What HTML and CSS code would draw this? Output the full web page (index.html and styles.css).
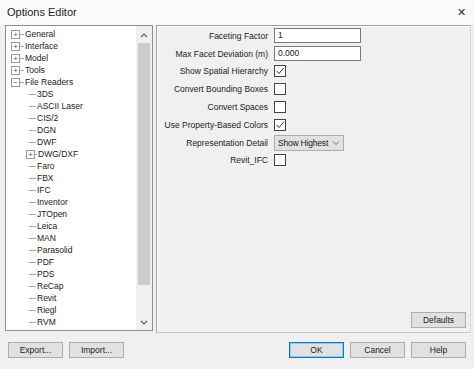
FILE: index.html
```html
<!DOCTYPE html>
<html lang="en">
<head>
    <meta charset="UTF-8">
    <meta name="viewport" content="width=device-width, initial-scale=1.0">
    <title>Options Editor</title>
    <link rel="stylesheet" href="styles.css">
</head>
<body>
    <div class="dialog">
        <div class="titlebar">
            <span class="title">Options Editor</span>
            <span class="close">&#x2715;</span>
        </div>

        <div class="main">
            <div class="tree">
                <ul class="tree-list">
                    <li class="node"><span class="expander">+</span><span class="stub"></span>General</li>
                    <li class="node"><span class="expander">+</span><span class="stub"></span>Interface</li>
                    <li class="node"><span class="expander">+</span><span class="stub"></span>Model</li>
                    <li class="node"><span class="expander">+</span><span class="stub"></span>Tools</li>
                    <li class="node"><span class="expander">&minus;</span><span class="stub"></span>File Readers</li>
                    <li class="leaf"><span class="branch"></span>3DS</li>
                    <li class="leaf"><span class="branch"></span>ASCII Laser</li>
                    <li class="leaf"><span class="branch"></span>CIS/2</li>
                    <li class="leaf"><span class="branch"></span>DGN</li>
                    <li class="leaf"><span class="branch"></span>DWF</li>
                    <li class="leaf sub"><span class="expander">+</span><span class="stub"></span>DWG/DXF</li>
                    <li class="leaf"><span class="branch"></span>Faro</li>
                    <li class="leaf"><span class="branch"></span>FBX</li>
                    <li class="leaf"><span class="branch"></span>IFC</li>
                    <li class="leaf"><span class="branch"></span>Inventor</li>
                    <li class="leaf"><span class="branch"></span>JTOpen</li>
                    <li class="leaf"><span class="branch"></span>Leica</li>
                    <li class="leaf"><span class="branch"></span>MAN</li>
                    <li class="leaf"><span class="branch"></span>Parasolid</li>
                    <li class="leaf"><span class="branch"></span>PDF</li>
                    <li class="leaf"><span class="branch"></span>PDS</li>
                    <li class="leaf"><span class="branch"></span>ReCap</li>
                    <li class="leaf"><span class="branch"></span>Revit</li>
                    <li class="leaf"><span class="branch"></span>Riegl</li>
                    <li class="leaf"><span class="branch"></span>RVM</li>
                </ul>
                <div class="scrollbar">
                    <svg class="arrow" width="16" height="14" viewBox="0 0 16 14"><polyline points="5,9 8,6 11,9" fill="none" stroke="#606060" stroke-width="1.2"/></svg>
                    <div class="track"><div class="thumb"></div></div>
                    <svg class="arrow" width="16" height="14" viewBox="0 0 16 14"><polyline points="5,5 8,8 11,5" fill="none" stroke="#606060" stroke-width="1.2"/></svg>
                </div>
            </div>

            <div class="panel">
                <div class="form">
                    <label>Faceting Factor</label>
                    <div class="field">1</div>

                    <label>Max Facet Deviation (m)</label>
                    <div class="field">0.000</div>

                    <label>Show Spatial Hierarchy</label>
                    <span class="check"><svg width="10" height="10" viewBox="0 0 10 10"><polyline points="1.5,4.8 4,7.5 8.8,1.8" fill="none" stroke="#333" stroke-width="1"/></svg></span>

                    <label>Convert Bounding Boxes</label>
                    <span class="check"></span>

                    <label>Convert Spaces</label>
                    <span class="check"></span>

                    <label>Use Property-Based Colors</label>
                    <span class="check"><svg width="10" height="10" viewBox="0 0 10 10"><polyline points="1.5,4.8 4,7.5 8.8,1.8" fill="none" stroke="#333" stroke-width="1"/></svg></span>

                    <label>Representation Detail</label>
                    <div class="combo"><span class="combo-text">Show Highest</span><svg width="8" height="6" viewBox="0 0 8 6"><polyline points="1,1.5 4,4.5 7,1.5" fill="none" stroke="#707070" stroke-width="1"/></svg></div>

                    <label>Revit_IFC</label>
                    <span class="check"></span>
                </div>
                <div class="panel-foot">
                    <button class="btn">Defaults</button>
                </div>
            </div>
        </div>

        <div class="footer">
            <div class="btn-row">
                <button class="btn">Export...</button>
                <button class="btn">Import...</button>
            </div>
            <div class="btn-row">
                <button class="btn default">OK</button>
                <button class="btn">Cancel</button>
                <button class="btn">Help</button>
            </div>
        </div>
    </div>
</body>
</html>
```

FILE: styles.css
```css
* {
    box-sizing: border-box;
    margin: 0;
    padding: 0;
}

body {
    font-family: 'Liberation Sans', Arial, sans-serif;
    font-size: 8.5px;
    color: #1a1a1a;
    background: #f0f0f0;
    width: 474px;
    height: 369px;
    overflow: hidden;
}

.dialog {
    display: flex;
    flex-direction: column;
    height: 369px;
}

.titlebar {
    height: 25px;
    background: #fafafa;
    display: flex;
    align-items: center;
    justify-content: space-between;
    padding: 0 8px 1px 7px;
}

.title {
    font-size: 11px;
    color: #222;
}

.close {
    font-size: 11px;
    color: #333;
}

.main {
    display: flex;
    align-items: flex-start;
    padding-left: 5px;
    height: 308px;
}

/* tree on the left */
.tree {
    width: 148px;
    height: 306px;
    border: 1px solid #8a8f98;
    background: #fff;
    display: flex;
}

.tree-list {
    list-style: none;
    flex: 1;
    padding-top: 2px;
    padding-left: 5px;
}

.tree-list li {
    height: 12px;
    line-height: 12px;
    display: flex;
    align-items: center;
    white-space: nowrap;
}

.expander {
    width: 9px;
    height: 9px;
    border: 1px solid #9a9a9a;
    background: #fff;
    color: #555;
    font-size: 8px;
    line-height: 7px;
    text-align: center;
    flex-shrink: 0;
}

.stub {
    width: 4px;
    border-top: 1px solid #a8a8a8;
    margin-right: 1px;
    flex-shrink: 0;
}

.leaf {
    padding-left: 18px;
}

.leaf.sub {
    padding-left: 15px;
}

.leaf.sub .stub {
    width: 2px;
}

.branch {
    width: 7px;
    border-top: 1px solid #a8a8a8;
    margin-right: 1px;
}

.scrollbar {
    width: 16px;
    background: #f0f0f0;
    display: flex;
    flex-direction: column;
}

.arrow {
    display: block;
    margin-top: 2px;
}

.track {
    flex: 1;
    padding: 1px 2px;
}

.thumb {
    height: 242px;
    background: #cdcdcd;
}

/* options panel */
.panel {
    width: 315px;
    height: 308px;
    margin-left: 3px;
    border-top: 1px solid #a0a0a0;
    border-left: 1px solid #a0a0a0;
    border-bottom: 1px solid #c8c8c8;
    border-right: 1px solid #d8d8d8;
    box-shadow: inset 1px 1px 0 #fff;
    display: flex;
    flex-direction: column;
}

.form {
    display: grid;
    grid-template-columns: 111px 1fr;
    grid-auto-rows: 17.8px;
    column-gap: 6px;
    align-items: center;
    padding-top: 1px;
}

.form label {
    text-align: right;
    white-space: nowrap;
    color: #222;
}

.field {
    width: 87px;
    height: 15px;
    border: 1px solid #7a7a7a;
    background: #fff;
    padding-left: 3px;
    line-height: 13px;
}

.check {
    width: 12px;
    height: 12px;
    border: 1px solid #444;
    background: #fff;
    display: flex;
    align-items: center;
    justify-content: center;
}

.combo {
    width: 70px;
    height: 16px;
    border: 1px solid #adadad;
    background: #e1e1e1;
    display: flex;
    align-items: center;
    justify-content: space-between;
    padding: 0 3px 0 3px;
    white-space: nowrap;
}

.combo-text {
    letter-spacing: -0.2px;
}

.panel-foot {
    margin-top: auto;
    display: flex;
    justify-content: flex-end;
    padding: 0 4px 4px 0;
}

.btn {
    width: 55px;
    height: 16px;
    border: 1px solid #adadad;
    background: #e1e1e1;
    font-family: inherit;
    font-size: 8.5px;
    color: #1a1a1a;
}

.btn.default {
    border-color: #0078d7;
    box-shadow: inset 0 0 0 1px #9dc6ec;
}

.footer {
    flex: 1;
    display: flex;
    justify-content: space-between;
    padding: 9px 8px 0 8px;
}

.btn-row {
    display: flex;
    gap: 6px;
}
```
